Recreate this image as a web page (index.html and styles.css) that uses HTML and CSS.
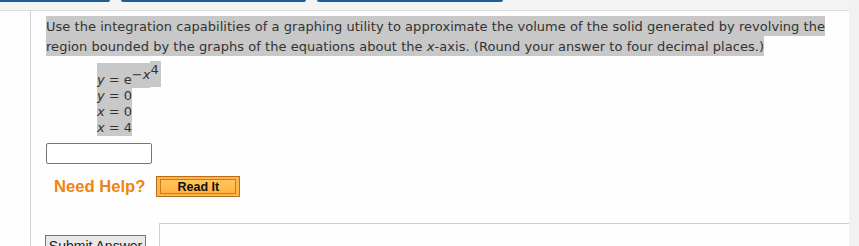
FILE: index.html
```html
<!DOCTYPE html>
<html>
<head>
<meta charset="utf-8">
<link rel="stylesheet" href="styles.css">
</head>
<body>
<div class="page">
  <div class="main">
    <div class="topbar">
      <div class="tab tab1"></div>
      <div class="tab tab2"></div>
      <div class="tab tab3"></div>
    </div>
    <div class="content">
      <div class="gutter"></div>
      <div class="question">
        <p class="prompt"><span class="hl">Use the integration capabilities of a graphing utility to approximate the volume of the solid generated by revolving the region bounded by the graphs of the equations about the <i>x</i>-axis. (Round your answer to four decimal places.)</span></p>
        <div class="eqs">
          <div class="eq eq-first"><span class="hl hl-main"><i>y</i> = e<span class="sup1">−<i>x</i></span></span><span class="hl hl-sup"><span class="sup2">4</span></span></div>
          <div class="eq"><span class="hl"><i>y</i> = 0</span></div>
          <div class="eq"><span class="hl"><i>x</i> = 0</span></div>
          <div class="eq"><span class="hl"><i>x</i> = 4</span></div>
        </div>
        <input class="answer" type="text">
        <div class="help">
          <span class="need">Need Help?</span>
          <span class="readit"><span class="readit-inner">Read It</span></span>
        </div>
        <div class="submit-row">
          <button class="submit">Submit Answer</button>
          <div class="box"></div>
        </div>
      </div>
    </div>
  </div>
  <div class="rail"></div>
</div>
</body>
</html>
```
FILE: styles.css
```css
html, body {
  margin: 0;
  padding: 0;
  background: #fefefe;
  overflow: hidden;
}
.page {
  display: flex;
  width: 859px;
  height: 246px;
  overflow: hidden;
}
.main {
  width: 849px;
  display: flex;
  flex-direction: column;
  overflow: hidden;
}
.rail {
  width: 10px;
  flex-shrink: 0;
  background: #f1f1f1;
}
.topbar {
  flex-shrink: 0;
  height: 10px;
  background: #f4f4f4;
  border-bottom: 1px solid #dcdcdc;
  display: flex;
  gap: 11px;
  align-items: flex-start;
}
.tab {
  height: 2px;
  background: #1b5f9c;
  border-radius: 0 0 3px 3px;
}
.tab1 { width: 110px; border-radius: 0 0 3px 0; }
.tab2 { width: 185px; }
.tab3 { width: 186px; }
.content {
  display: flex;
  flex: 1 0 auto;
}
.gutter {
  width: 30px;
  border-right: 1px solid #cfcfcf;
}
.question {
  padding-left: 14px;
  flex: 1;
  font-family: "DejaVu Sans", Verdana, sans-serif;
  font-size: 13px;
  color: #333;
}
.hl {
  background: #c8c8c8;
}
.prompt {
  margin: 5px 0 0 1px;
  max-width: 790px;
  line-height: 20px;
  letter-spacing: 0.04px;
}
.prompt .hl {
  padding: 2.5px 0;
}
.eqs {
  margin: 6px 0 0 52px;
}
.eq {
  display: flex;
  align-items: flex-end;
  height: 16px;
}
.eq .hl {
  display: inline-block;
  height: 16px;
  line-height: 16px;
}
.eq-first {
  height: 26px;
}
.eq-first .hl-main {
  height: 25px;
  line-height: 16px;
  padding-top: 9px;
  box-sizing: border-box;
}
.sup1 {
  position: relative;
  top: -5px;
}
.eq-first .hl-sup {
  height: 26px;
  line-height: 16px;
  box-sizing: border-box;
  padding-right: 2px;
  margin-bottom: 1px;
}
.sup2 {
  position: relative;
  top: 1px;
}
.answer {
  display: block;
  margin: 7px 0 0 1px;
  width: 106px;
  height: 21px;
  box-sizing: border-box;
  border: 1px solid #767676;
  border-radius: 2px;
  padding: 0;
  background: #fff;
}
.help {
  display: flex;
  align-items: center;
  margin-top: 12px;
  margin-left: 9px;
  gap: 11px;
}
.need {
  font-family: "Liberation Sans", Arial, sans-serif;
  font-weight: bold;
  font-size: 16.6px;
  color: #ee8411;
}
.readit {
  display: inline-block;
  width: 84px;
  height: 21px;
  box-sizing: border-box;
  border: 1px solid #b86d1c;
  background: #fdb449;
  padding: 2px 3px;
}
.readit-inner {
  display: flex;
  align-items: center;
  justify-content: center;
  height: 100%;
  box-sizing: border-box;
  border: 1px solid #c87b22;
  background: linear-gradient(#ffc55c, #ffb443);
  font-family: "Liberation Sans", Arial, sans-serif;
  font-weight: bold;
  font-size: 12.5px;
  color: #111;
}
.submit-row {
  display: flex;
  align-items: flex-start;
  margin-top: 26px;
  gap: 13px;
}
.submit {
  margin: 12px 0 0 0;
  width: 101px;
  height: 22px;
  padding: 0;
  border: 1px solid #767676;
  border-radius: 0;
  background: #e9e9e9;
  font-family: "Liberation Sans", Arial, sans-serif;
  font-size: 14px;
  color: #222;
}
.box {
  flex: 1;
  height: 60px;
  border-top: 1px solid #cfcfcf;
  border-left: 1px solid #cfcfcf;
}
```
